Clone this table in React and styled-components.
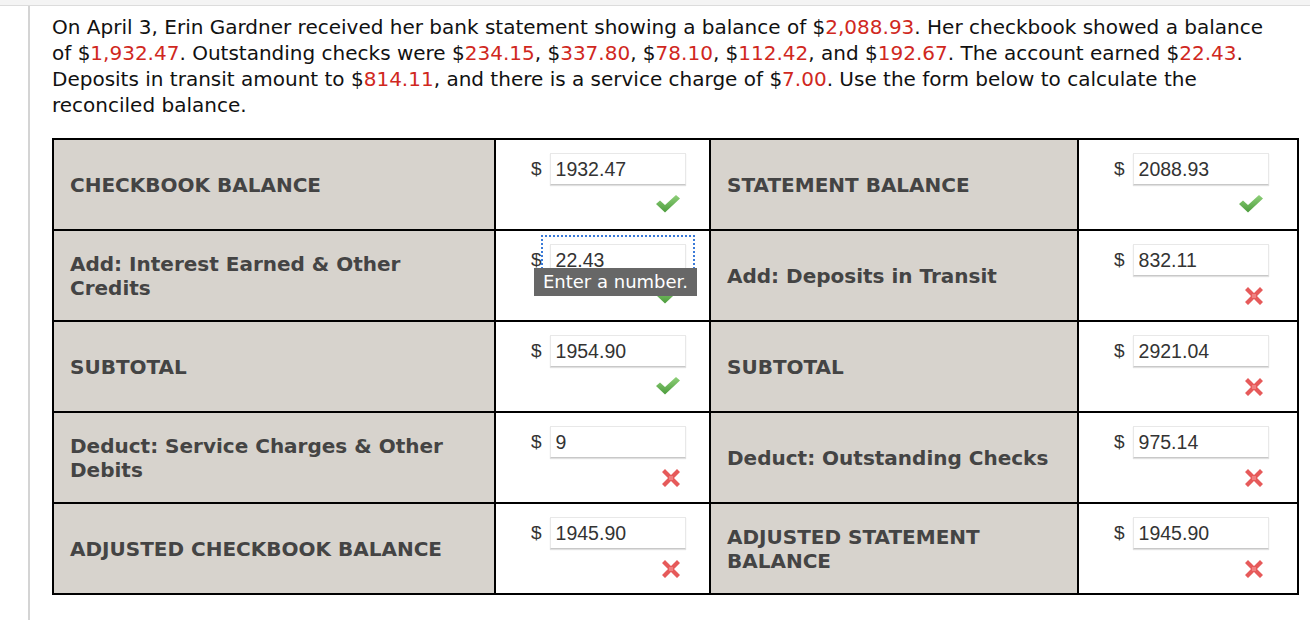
import React from 'react';
import styled, { createGlobalStyle } from 'styled-components';

const GlobalStyle = createGlobalStyle`
  html, body {
    margin: 0;
    padding: 0;
    background: #fff;
  }
`;

const TopStrip = styled.div`
  height: 5px;
  background: #f4f4f4;
  border-bottom: 1px solid #dcdcdc;
`;

const Page = styled.div`
  margin-left: 28px;
  border-left: 2px solid #d4d4d4;
  padding: 8px 0 20px 22px;
  min-height: 620px;
  box-sizing: border-box;
`;

const Question = styled.p`
  margin: 0 0 20px;
  width: 1230px;
  font-family: 'DejaVu Sans', Verdana, sans-serif;
  font-size: 20px;
  line-height: 26px;
  color: #111;
`;

const Amount = styled.span`
  color: #d0281e;
`;

const Sheet = styled.table`
  border-collapse: collapse;
  width: 1245px;
  table-layout: fixed;
  border: 2px solid #000;
`;

const Row = styled.tr`
  height: 91px;
`;

const Label = styled.td`
  background: #d7d3cd;
  border: 2px solid #000;
  padding: 0 16px;
  vertical-align: middle;
  font-family: 'DejaVu Sans', Verdana, sans-serif;
  font-weight: bold;
  font-size: 20px;
  line-height: 24px;
  color: #444;
`;

const Entry = styled.td`
  border: 2px solid #000;
  vertical-align: top;
  padding: 13px 0 0 35px;
  background: #fff;
`;

const FieldLine = styled.div`
  display: flex;
  align-items: center;
  gap: 8px;
  width: 156px;
  position: relative;
`;

const Dollar = styled.span`
  font-family: 'Liberation Sans', Arial, sans-serif;
  font-size: 19px;
  color: #333;
`;

const Field = styled.input`
  width: 136px;
  height: 32px;
  box-sizing: border-box;
  border: 1px solid #e8e8e8;
  border-bottom-color: #c8c8c8;
  box-shadow: 0 1px 1px rgba(0, 0, 0, 0.12);
  padding: 0 5px;
  font-family: 'Liberation Sans', Arial, sans-serif;
  font-size: 19.5px;
  color: #333;
  background: #fff;
  outline: ${(p) => (p.$focused ? '2px dotted #3a7ad8' : 'none')};
  outline-offset: 7px;
`;

const Tip = styled.div`
  position: absolute;
  left: 3px;
  top: 24px;
  width: 163px;
  height: 28px;
  background: #676767;
  color: #fff;
  font-family: 'DejaVu Sans', Verdana, sans-serif;
  font-size: 18px;
  line-height: 28px;
  text-align: center;
  z-index: 2;
`;

const Mark = styled.div`
  width: 156px;
  display: flex;
  justify-content: flex-end;
  padding-right: 6px;
  box-sizing: border-box;
  margin-top: ${(p) => (p.$ok ? '9px' : '10px')};
`;

function Check() {
  return (
    <svg width="26" height="20" viewBox="0 0 26 20">
      <defs>
        <linearGradient id="gck" x1="0" y1="0" x2="0" y2="1">
          <stop offset="0" stopColor="#8fd07a" />
          <stop offset="1" stopColor="#4c9c3c" />
        </linearGradient>
      </defs>
      <path d="M1 10 L5 6.5 L10 11 L21 1 L25 4.5 L10 18.5 Z" fill="url(#gck)" />
    </svg>
  );
}

function Cross() {
  return (
    <svg width="20" height="20" viewBox="0 0 20 20">
      <path
        d="M1 4 L4 1 L10 7 L16 1 L19 4 L13 10 L19 16 L16 19 L10 13 L4 19 L1 16 L7 10 Z"
        fill="#e65a5a"
      />
      <rect x="8" y="8" width="4" height="4" fill="#f08080" />
    </svg>
  );
}

function Money({ value, ok, focused, tip }) {
  return (
    <Entry>
      <FieldLine>
        <Dollar>$</Dollar>
        <Field readOnly value={value} $focused={focused} />
        {tip && <Tip>{tip}</Tip>}
      </FieldLine>
      <Mark $ok={ok}>{ok ? <Check /> : <Cross />}</Mark>
    </Entry>
  );
}

const rows = [
  {
    left: 'CHECKBOOK BALANCE',
    lv: '1932.47',
    lok: true,
    right: 'STATEMENT BALANCE',
    rv: '2088.93',
    rok: true,
  },
  {
    left: 'Add: Interest Earned & Other Credits',
    lv: '22.43',
    lok: true,
    focused: true,
    tip: 'Enter a number.',
    right: 'Add: Deposits in Transit',
    rv: '832.11',
    rok: false,
  },
  {
    left: 'SUBTOTAL',
    lv: '1954.90',
    lok: true,
    right: 'SUBTOTAL',
    rv: '2921.04',
    rok: false,
  },
  {
    left: 'Deduct: Service Charges & Other Debits',
    lv: '9',
    lok: false,
    right: 'Deduct: Outstanding Checks',
    rv: '975.14',
    rok: false,
  },
  {
    left: 'ADJUSTED CHECKBOOK BALANCE',
    lv: '1945.90',
    lok: false,
    right: 'ADJUSTED STATEMENT BALANCE',
    rv: '1945.90',
    rok: false,
  },
];

export default function App() {
  return (
    <>
      <GlobalStyle />
      <TopStrip />
      <Page>
        <Question>
          On April 3, Erin Gardner received her bank statement showing a balance of $
          <Amount>2,088.93</Amount>. Her checkbook showed a balance of $
          <Amount>1,932.47</Amount>. Outstanding checks were $<Amount>234.15</Amount>, $
          <Amount>337.80</Amount>, $<Amount>78.10</Amount>, $<Amount>112.42</Amount>, and $
          <Amount>192.67</Amount>. The account earned $<Amount>22.43</Amount>. Deposits in
          transit amount to $<Amount>814.11</Amount>, and there is a service charge of $
          <Amount>7.00</Amount>. Use the form below to calculate the reconciled balance.
        </Question>
        <Sheet>
          <colgroup>
            <col style={{ width: 442 }} />
            <col style={{ width: 215 }} />
            <col style={{ width: 368 }} />
            <col style={{ width: 220 }} />
          </colgroup>
          <tbody>
            {rows.map((r) => (
              <Row key={r.left}>
                <Label>{r.left}</Label>
                <Money value={r.lv} ok={r.lok} focused={r.focused} tip={r.tip} />
                <Label>{r.right}</Label>
                <Money value={r.rv} ok={r.rok} />
              </Row>
            ))}
          </tbody>
        </Sheet>
      </Page>
    </>
  );
}
